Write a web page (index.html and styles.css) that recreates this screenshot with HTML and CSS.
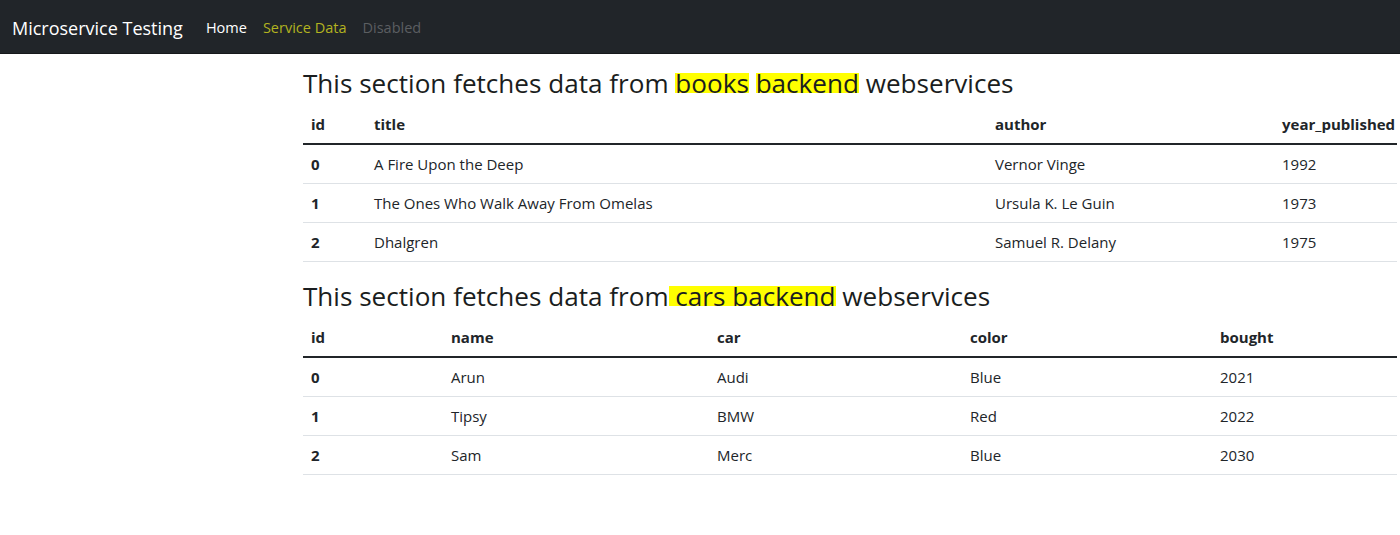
FILE: index.html
```html
<!DOCTYPE html>
<html lang="en">
<head>
<meta charset="utf-8">
<title>Microservice Testing</title>
<link rel="stylesheet" href="styles.css">
</head>
<body>
<nav class="navbar">
  <span class="brand">Microservice Testing</span>
  <a class="nav-link home" href="#">Home</a>
  <a class="nav-link active" href="#">Service Data</a>
  <span class="nav-link disabled">Disabled</span>
</nav>
<main class="content">
  <h3 class="heading">This section fetches data from <span class="hl">books</span> <span class="hl">backend</span> webservices</h3>
  <table class="table">
    <colgroup>
      <col class="c63"><col class="c621"><col class="c287"><col class="c123">
    </colgroup>
    <thead>
      <tr><th>id</th><th>title</th><th>author</th><th>year_published</th></tr>
    </thead>
    <tbody>
      <tr><th>0</th><td>A Fire Upon the Deep</td><td>Vernor Vinge</td><td>1992</td></tr>
      <tr><th>1</th><td>The Ones Who Walk Away From Omelas</td><td>Ursula K. Le Guin</td><td>1973</td></tr>
      <tr><th>2</th><td>Dhalgren</td><td>Samuel R. Delany</td><td>1975</td></tr>
    </tbody>
  </table>
  <h3 class="heading second">This section fetches data from<span class="hl"> cars backend</span> webservices</h3>
  <table class="table">
    <colgroup>
      <col class="c140"><col class="c266"><col class="c253"><col class="c250"><col class="c185">
    </colgroup>
    <thead>
      <tr><th>id</th><th>name</th><th>car</th><th>color</th><th>bought</th></tr>
    </thead>
    <tbody>
      <tr><th>0</th><td>Arun</td><td>Audi</td><td>Blue</td><td>2021</td></tr>
      <tr><th>1</th><td>Tipsy</td><td>BMW</td><td>Red</td><td>2022</td></tr>
      <tr><th>2</th><td>Sam</td><td>Merc</td><td>Blue</td><td>2030</td></tr>
    </tbody>
  </table>
</main>
</body>
</html>
```
FILE: styles.css
```css
* { box-sizing: border-box; }
html, body { margin: 0; padding: 0; }
body {
  font-family: "Open Sans", "Noto Sans", sans-serif;
  color: #212529;
  background: #fff;
  font-size: 15px;
}
.navbar {
  height: 54px;
  background: #212529;
  border-bottom: 1px solid #16181b;
  display: flex;
  align-items: center;
  padding: 2px 12px 0;
}
.brand {
  color: #fff;
  font-size: 18px;
  margin-right: 15px;
  white-space: nowrap;
}
.nav-link {
  font-size: 14.5px;
  padding: 0 8px;
  text-decoration: none;
  white-space: nowrap;
}
.home { color: #fff; }
.active { color: #b3b320; }
.disabled { color: #5b5e61; }
.content {
  padding-left: 303px;
}
.heading {
  font-size: 26.1px;
  font-weight: 400;
  line-height: 34px;
  margin: 12px 0 5px;
  white-space: nowrap;
  color: #1a1d20;
}
.heading.second { margin-top: 17px; }
.hl {
  background: linear-gradient(to bottom, transparent 21%, #ffff00 21%, #ffff00 77%, transparent 77%);
}
.table {
  width: 1094px;
  border-collapse: collapse;
  table-layout: fixed;
}
.table th, .table td {
  text-align: left;
  padding: 8px;
  line-height: 22px;
  border-bottom: 1px solid #dee2e6;
  white-space: nowrap;
}
.table th { font-weight: 700; }
.table thead th { border-bottom: 2px solid #212529; }
.c63 { width: 63px; }
.c621 { width: 621px; }
.c287 { width: 287px; }
.c123 { width: 123px; }
.c140 { width: 140px; }
.c266 { width: 266px; }
.c253 { width: 253px; }
.c250 { width: 250px; }
.c185 { width: 185px; }
```
